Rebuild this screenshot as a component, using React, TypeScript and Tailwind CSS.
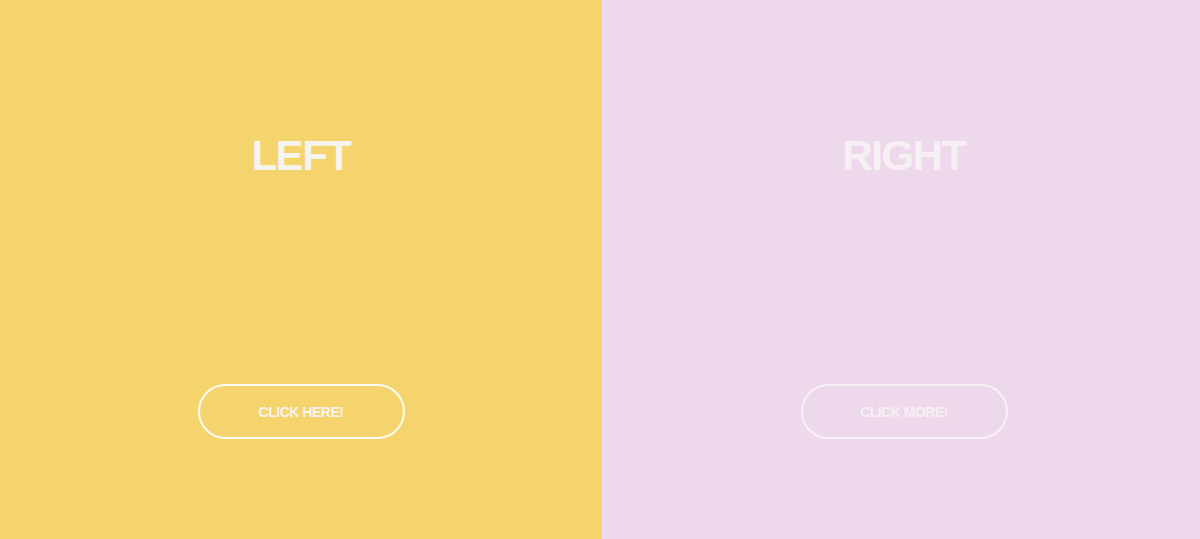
export default function App() {
  return (
    <div className="flex h-[539px] w-full font-['Liberation_Sans',Arial,sans-serif] font-bold text-[#f5f4f0]">
      {/* left half */}
      <section className="flex w-[602px] flex-col items-center bg-[#f5d36d] pt-[135px]">
        <h1 className="text-[42px] leading-none tracking-[-0.035em]">LEFT</h1>
        <button className="mt-[207px] flex h-[55px] w-[207px] items-center justify-center rounded-full border-2 border-[#fbfbf6] pt-px text-[14px] tracking-[-0.035em]">
          CLICK HERE!
        </button>
      </section>

      {/* right half */}
      <section className="flex flex-1 flex-col items-center bg-[#eed9ec] pl-[6px] pt-[135px] text-[#f6f0f4]">
        <h1 className="text-[42px] leading-none tracking-[-0.035em]">RIGHT</h1>
        <button className="mt-[207px] flex h-[55px] w-[207px] items-center justify-center rounded-full border-2 border-[#f8f2f7] pt-px text-[14px] tracking-[-0.035em]">
          CLICK MORE!
        </button>
      </section>
    </div>
  )
}
